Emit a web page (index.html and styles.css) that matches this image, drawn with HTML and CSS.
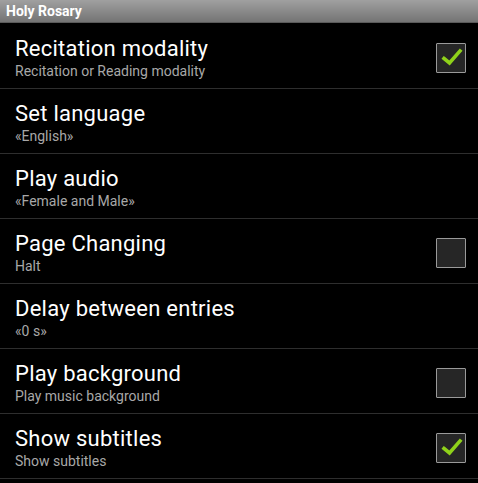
FILE: index.html
```html
<!DOCTYPE html>
<html>
<head>
<meta charset="utf-8">
<link rel="stylesheet" href="styles.css">
</head>
<body>
<div class="titlebar">Holy Rosary</div>
<div class="list">
  <div class="row">
    <div class="texts"><div class="title">Recitation modality</div><div class="summary">Recitation or Reading modality</div></div>
    <div class="check on"><svg viewBox="0 0 30 30" width="30" height="30"><path d="M8 16.5 L13.5 21 L24 9" fill="none" stroke="#8fd11a" stroke-width="3.6" stroke-linecap="square"/></svg></div>
  </div>
  <div class="row">
    <div class="texts"><div class="title">Set language</div><div class="summary">«English»</div></div>
  </div>
  <div class="row">
    <div class="texts"><div class="title">Play audio</div><div class="summary">«Female and Male»</div></div>
  </div>
  <div class="row">
    <div class="texts"><div class="title">Page Changing</div><div class="summary">Halt</div></div>
    <div class="check"></div>
  </div>
  <div class="row">
    <div class="texts"><div class="title">Delay between entries</div><div class="summary">«0 s»</div></div>
  </div>
  <div class="row">
    <div class="texts"><div class="title">Play background</div><div class="summary">Play music background</div></div>
    <div class="check"></div>
  </div>
  <div class="row">
    <div class="texts"><div class="title">Show subtitles</div><div class="summary">Show subtitles</div></div>
    <div class="check on"><svg viewBox="0 0 30 30" width="30" height="30"><path d="M8 16.5 L13.5 21 L24 9" fill="none" stroke="#8fd11a" stroke-width="3.6" stroke-linecap="square"/></svg></div>
  </div>
</div>
</body>
</html>
```
FILE: styles.css
```css
html, body {
  margin: 0;
  padding: 0;
  background: #000;
  font-family: Roboto, "Liberation Sans", sans-serif;
  overflow: hidden;
}
.titlebar {
  height: 23px;
  box-sizing: border-box;
  background: linear-gradient(#a0a0a0, #747474);
  border-bottom: 1px solid #5a5a5a;
  color: #fff;
  font-weight: bold;
  font-size: 14px;
  line-height: 22px;
  padding-left: 6px;
}
.list {
  padding-top: 1px;
}
.row {
  height: 65px;
  box-sizing: border-box;
  border-bottom: 1px solid #2e2e2e;
  display: flex;
  align-items: center;
  padding: 0 12px 0 15px;
}
.texts {
  flex: 1;
  padding-top: 3px;
}
.title {
  color: #fff;
  font-size: 22px;
  letter-spacing: 0.25px;
  line-height: 26px;
}
.summary {
  color: #a8a8a8;
  font-size: 14px;
  line-height: 18px;
}
.check {
  width: 30px;
  height: 30px;
  box-sizing: border-box;
  border: 1.5px solid #9a9a9a;
  border-radius: 1px;
  background: #262626;
  margin-top: 3px;
  position: relative;
}
.check svg {
  position: absolute;
  left: -1.5px;
  top: -1.5px;
}
```
